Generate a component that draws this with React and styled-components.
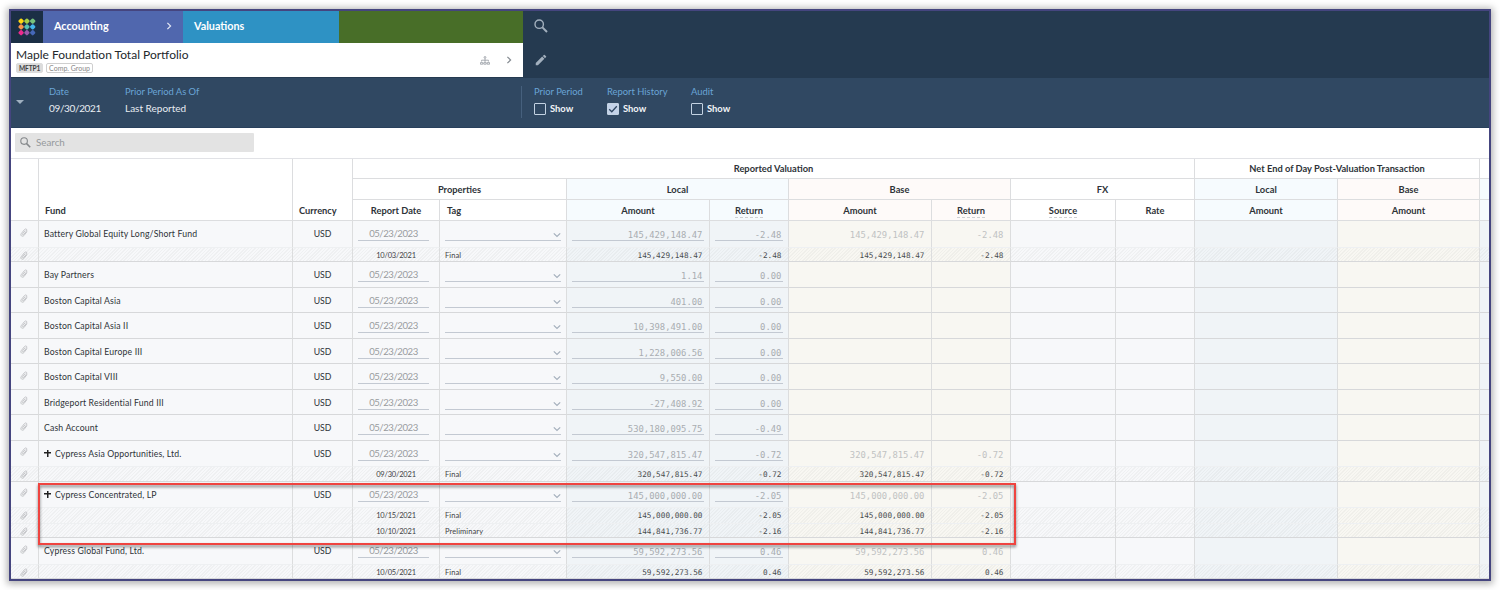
import React from "react";
import styled, { createGlobalStyle, css } from "styled-components";
import { MdEdit } from "react-icons/md";

const COLUMNS = "28px 254px 60px 87px 127px 143px 79px 143px 79px 105px 79px 143px 142px 9px";

const funds = [
  { name: "Battery Global Equity Long/Short Fund", amount: "145,429,148.47", ret: "-2.48", base: true,
    history: [{ date: "10/03/2021", tag: "Final", amount: "145,429,148.47", ret: "-2.48" }] },
  { name: "Bay Partners", amount: "1.14", ret: "0.00" },
  { name: "Boston Capital Asia", amount: "401.00", ret: "0.00" },
  { name: "Boston Capital Asia II", amount: "10,398,491.00", ret: "0.00" },
  { name: "Boston Capital Europe III", amount: "1,228,006.56", ret: "0.00" },
  { name: "Boston Capital VIII", amount: "9,550.00", ret: "0.00" },
  { name: "Bridgeport Residential Fund III", amount: "-27,408.92", ret: "0.00" },
  { name: "Cash Account", amount: "530,180,095.75", ret: "-0.49" },
  { name: "Cypress Asia Opportunities, Ltd.", plus: true, amount: "320,547,815.47", ret: "-0.72", base: true,
    history: [{ date: "09/30/2021", tag: "Final", amount: "320,547,815.47", ret: "-0.72" }] },
  { name: "Cypress Concentrated, LP", plus: true, amount: "145,000,000.00", ret: "-2.05", base: true,
    history: [
      { date: "10/15/2021", tag: "Final", amount: "145,000,000.00", ret: "-2.05" },
      { date: "10/10/2021", tag: "Preliminary", amount: "144,841,736.77", ret: "-2.16" },
    ] },
  { name: "Cypress Global Fund, Ltd.", amount: "59,592,273.56", ret: "0.46", base: true,
    history: [{ date: "10/05/2021", tag: "Final", amount: "59,592,273.56", ret: "0.46" }] },
];

const dots = ["#ffd90f", "#a5cf45", "#78c27b", "#f8944b", "#55c2b2", "#44b5ea", "#ee2a8e", "#9b59ab", "#4568b8"];

const Logo = () => (
  <svg width="18" height="18" viewBox="0 0 18 18">
    {dots.map((color, i) => (
      <rect key={color} x={0.9 + (i % 3) * 5.8} y={0.9 + Math.floor(i / 3) * 5.8} width="4.4" height="4.4" rx="1.1"
        fill={color} transform={`rotate(45 ${3.1 + (i % 3) * 5.8} ${3.1 + Math.floor(i / 3) * 5.8})`} />
    ))}
  </svg>
);

const Magnifier = ({ size, color }) => (
  <svg width={size} height={size} viewBox="0 0 14 14" fill="none" stroke={color}>
    <circle cx="5.2" cy="5.2" r="4.2" strokeWidth="1.4" />
    <path d="M8.4 8.4L13 13" strokeWidth="2" />
  </svg>
);

const OrgChart = () => (
  <svg width="10" height="9" viewBox="0 0 10 9" fill="none" stroke="#959ba2" strokeWidth="0.8">
    <circle cx="5" cy="1.4" r="0.9" />
    <path d="M5 2.3V6M1.6 5.6V4.2H8.4V5.6" />
    <path d="M0.4 8.2V6.6H2.8V8.2ZM3.8 8.2V6.6H6.2V8.2ZM7.2 8.2V6.6H9.6V8.2Z" />
  </svg>
);

const Chevron = ({ size = 8, color, down }) => (
  <svg width={size} height={size} viewBox="0 0 8 8" fill="none" stroke={color} strokeWidth="1.2">
    <path d={down ? "M0.8 2.3L4 5.5L7.2 2.3" : "M2.4 0.8L5.6 4L2.4 7.2"} />
  </svg>
);

const Clip = () => (
  <svg width="8" height="9" viewBox="0 0 8 9" fill="none" stroke="#bfc1c4" strokeWidth="0.9" strokeLinecap="round">
    <path d="M6.8 3.9L3.9 7.6C2.3 9.2 0 7.5 1.2 5.7L4.5 1.5C5.7 0.2 7.6 1.5 6.6 3L3.6 6.7C2.9 7.4 1.9 6.7 2.5 5.9L4.9 2.9" />
  </svg>
);

const App = () => {
  return (
    <>
      <GlobalStyle />
      <Frame>
        <TopBar>
          <NavSide>
            <Nav>
              <LogoBox><Logo /></LogoBox>
              <NavItem $width={140} $color="#5067ae">
                Accounting
                <Chevron color="#e4e8f4" />
              </NavItem>
              <NavItem $width={156} $color="#2e92c4">Valuations</NavItem>
              <NavItem $width={184} $color="#486e28" />
            </Nav>
            <TitleBar>
              <div>
                <Title>Maple Foundation Total Portfolio</Title>
                <Badges>
                  <Badge $filled>MFTP1</Badge>
                  <Badge>Comp. Group</Badge>
                </Badges>
              </div>
              <TitleIcons>
                <OrgChart />
                <Chevron color="#858b91" />
              </TitleIcons>
            </TitleBar>
          </NavSide>
          <Tools>
            <Magnifier size={14} color="#a3b0be" />
            <MdEdit size={14} color="#a3b0be" />
          </Tools>
        </TopBar>

        <Params>
          <Caret />
          <Param $width={76}><ParamLabel>Date</ParamLabel><ParamValue $tight>09/30/2021</ParamValue></Param>
          <Param $width={396}><ParamLabel>Prior Period As Of</ParamLabel><ParamValue>Last Reported</ParamValue></Param>
          <Divider />
          <Param $width={73}><ParamLabel>Prior Period</ParamLabel><Check /></Param>
          <Param $width={84}><ParamLabel>Report History</ParamLabel><Check checked /></Param>
          <Param $width={80}><ParamLabel>Audit</ParamLabel><Check /></Param>
        </Params>

        <SearchRow>
          <SearchBox>
            <Magnifier size={11} color="#85888b" />
            <span>Search</span>
          </SearchBox>
        </SearchRow>

        <Header>
          <HeadCell $col="1" $row="1 / 4" />
          <HeadCell $col="2" $row="1 / 4" $align="left" $pad={6}>Fund</HeadCell>
          <HeadCell $col="3" $row="1 / 4" $align="left" $pad={6}>Currency</HeadCell>
          <HeadCell $col="4 / 12" $row="1">Reported Valuation</HeadCell>
          <HeadCell $col="12 / 14" $row="1">Net End of Day Post-Valuation Transaction</HeadCell>
          <HeadCell $col="14" $row="1" $last />
          <HeadCell $col="4 / 6" $row="2">Properties</HeadCell>
          <HeadCell $col="6 / 8" $row="2" $tone="local">Local</HeadCell>
          <HeadCell $col="8 / 10" $row="2" $tone="base">Base</HeadCell>
          <HeadCell $col="10 / 12" $row="2">FX</HeadCell>
          <HeadCell $col="12" $row="2" $tone="local">Local</HeadCell>
          <HeadCell $col="13" $row="2" $tone="base">Base</HeadCell>
          <HeadCell $col="14" $row="2" $tone="local" $last />
          <HeadCell $col="4" $row="3">Report Date</HeadCell>
          <HeadCell $col="5" $row="3" $align="left" $pad={7}>Tag</HeadCell>
          <HeadCell $col="6" $row="3" $tone="local">Amount</HeadCell>
          <HeadCell $col="7" $row="3" $tone="local"><Hint>Return</Hint></HeadCell>
          <HeadCell $col="8" $row="3" $tone="base">Amount</HeadCell>
          <HeadCell $col="9" $row="3" $tone="base"><Hint>Return</Hint></HeadCell>
          <HeadCell $col="10" $row="3"><Hint>Source</Hint></HeadCell>
          <HeadCell $col="11" $row="3">Rate</HeadCell>
          <HeadCell $col="12" $row="3" $tone="local">Amount</HeadCell>
          <HeadCell $col="13" $row="3" $tone="base">Amount</HeadCell>
          <HeadCell $col="14" $row="3" $tone="local" $last />
        </Header>

        {funds.map((fund) => (
          <Fund key={fund.name} fund={fund} />
        ))}
      </Frame>
      <Highlight />
    </>
  );
};

export default App;

const Check = ({ checked }) => (
  <CheckLabel>
    <CheckBox $checked={checked}>
      {checked && (
        <svg width="10" height="10" viewBox="0 0 10 10" fill="none" stroke="#2f4660" strokeWidth="1.3">
          <path d="M1.2 5.2L3.8 7.7L8.8 2.3" />
        </svg>
      )}
    </CheckBox>
    Show
  </CheckLabel>
);

const Fund = ({ fund }) => {
  const history = fund.history || [];
  return (
    <Group>
      <Row>
        <ClipCell><Clip /></ClipCell>
        <NameCell>
          {fund.plus && <Plus />}
          {fund.name}
        </NameCell>
        <Cell><Currency>USD</Currency></Cell>
        <Cell><DateInput>05/23/2023</DateInput></Cell>
        <Cell><TagInput><Chevron color="#a4afbc" down /></TagInput></Cell>
        <Cell $tone="local"><NumberInput>{fund.amount}</NumberInput></Cell>
        <Cell $tone="local"><NumberInput>{fund.ret}</NumberInput></Cell>
        <Cell $tone="base">{fund.base && <Number>{fund.amount}</Number>}</Cell>
        <Cell $tone="base">{fund.base && <Number>{fund.ret}</Number>}</Cell>
        <Cell />
        <Cell />
        <Cell $tone="local" />
        <Cell $tone="base" />
        <Cell $tone="local" $last />
      </Row>
      {history.map((item) => (
        <HistoryRow key={item.date}>
          <ClipCell $small><Clip /></ClipCell>
          <Cell />
          <Cell />
          <Cell><SmallText $center>{item.date}</SmallText></Cell>
          <Cell><SmallText>{item.tag}</SmallText></Cell>
          <Cell $tone="local"><SmallNumber>{item.amount}</SmallNumber></Cell>
          <Cell $tone="local"><SmallNumber>{item.ret}</SmallNumber></Cell>
          <Cell $tone="base"><SmallNumber>{item.amount}</SmallNumber></Cell>
          <Cell $tone="base"><SmallNumber>{item.ret}</SmallNumber></Cell>
          <Cell />
          <Cell />
          <Cell $tone="local" />
          <Cell $tone="base" />
          <Cell $tone="local" $last />
        </HistoryRow>
      ))}
    </Group>
  );
};

const GlobalStyle = createGlobalStyle`
  * {
    box-sizing: border-box;
  }

  body {
    margin: 0;
    background: #fff;
    font-family: Lato, "Open Sans", sans-serif;
    color: #2e3338;
    overflow: hidden;
  }

  svg {
    display: block;
    flex-shrink: 0;
  }
`

const headTones = { local: "#f6fbfe", base: "#fefaf9" };
const bodyTones = { local: "#f0f4f7", base: "#f8f7f2" };

const Frame = styled.div`
  width: 1482px;
  height: 572px;
  margin: 9px;
  border: 2px solid #45457f;
  background: #fff;
  overflow: hidden;
  box-shadow: 0 1px 7px 2px rgba(0, 0, 0, 0.3);
`

const TopBar = styled.div`
  display: flex;
  height: 67px;
  background: #253a50;
`

const NavSide = styled.div`
  width: 512px;
`

const Nav = styled.div`
  display: flex;
  height: 32px;
`

const LogoBox = styled.div`
  display: flex;
  width: 32px;
  padding: 7px 0 0 7px;
  background: #1b2f45;
`

const NavItem = styled.div`
  display: flex;
  align-items: center;
  justify-content: space-between;
  width: ${(props) => props.$width}px;
  padding: 0 10px 3px 11px;
  background: ${(props) => props.$color};
  color: #fff;
  font-size: 10.8px;
  font-weight: 700;
`

const TitleBar = styled.div`
  display: flex;
  justify-content: space-between;
  height: 34px;
  padding: 4px 10px 0 5px;
  background: #fff;
`

const Title = styled.div`
  color: #24282c;
  font-size: 12px;
  line-height: 15px;
`

const Badges = styled.div`
  display: flex;
  gap: 3px;
  margin-top: 1px;
`

const Badge = styled.span`
  height: 10px;
  padding: 0 2px;
  border: 1px solid ${(props) => (props.$filled ? "#dcdcdc" : "#cfcfcf")};
  border-radius: 2px;
  background: ${(props) => (props.$filled ? "#dcdcdc" : "#fff")};
  color: ${(props) => (props.$filled ? "#3f3f3f" : "#888")};
  font-size: ${(props) => (props.$filled ? 6.6 : 7)}px;
  letter-spacing: ${(props) => (props.$filled ? "-0.15px" : "0")};
  font-weight: ${(props) => (props.$filled ? 700 : 400)};
  line-height: 8px;
`

const TitleIcons = styled.div`
  display: flex;
  align-items: center;
  gap: 15px;
  padding-bottom: 4px;
`

const Tools = styled.div`
  display: flex;
  flex-direction: column;
  gap: 20px;
  padding: 8px 0 0 11px;
`

const Params = styled.div`
  display: flex;
  height: 50px;
  padding-top: 8px;
  background: #304862;
  border-bottom: 1px solid #28405c;
`

const Caret = styled.div`
  width: 0;
  height: 0;
  margin: 14px 25px 0 5px;
  border: 4px solid transparent;
  border-top-color: #9fb0c0;
  border-bottom: 0;
`

const Param = styled.div`
  width: ${(props) => props.$width}px;
`

const ParamLabel = styled.div`
  color: #6aa5d6;
  font-size: 9.4px;
  line-height: 12px;
`

const ParamValue = styled.div`
  margin-top: 4px;
  color: #e8edf2;
  font-size: 10px;
  letter-spacing: ${(props) => (props.$tight ? "-0.35px" : "0")};
  line-height: 13px;
`

const Divider = styled.div`
  width: 1px;
  height: 32px;
  margin-right: 12px;
  background: #46607d;
`

const CheckLabel = styled.div`
  display: flex;
  align-items: center;
  gap: 4px;
  margin-top: 4px;
  color: #f2f5f8;
  font-size: 9.4px;
  font-weight: 700;
  line-height: 13px;
`

const CheckBox = styled.span`
  display: flex;
  align-items: center;
  justify-content: center;
  width: 12px;
  height: 12px;
  border: 1px solid #c3d2e2;
  border-radius: 1px;
  background: ${(props) => (props.$checked ? "#c3d2e8" : "transparent")};
`

const SearchRow = styled.div`
  height: 31px;
  padding: 5px 4px 0;
  border-bottom: 1px solid #e1e2e6;
`

const SearchBox = styled.div`
  display: flex;
  align-items: center;
  gap: 5px;
  width: 239px;
  height: 19px;
  padding-left: 5px;
  border-radius: 1px;
  background: #e3e3e3;
  color: #95999c;
  font-size: 9.8px;

  span {
    padding-bottom: 2px;
  }
`

const Header = styled.div`
  display: grid;
  grid-template-columns: ${COLUMNS};
  grid-template-rows: 20px 21px 21px;
`

const HeadCell = styled.div`
  display: flex;
  grid-column: ${(props) => props.$col};
  grid-row: ${(props) => props.$row};
  align-items: flex-end;
  justify-content: ${(props) => (props.$align === "left" ? "flex-start" : "center")};
  padding: 0 0 3px ${(props) => props.$pad || 0}px;
  border-right: ${(props) => (props.$last ? "0" : "1px solid #dcdddf")};
  border-bottom: 1px solid #dcdddf;
  background: ${(props) => headTones[props.$tone] || "#fff"};
  font-size: 9.3px;
  font-weight: 700;
  line-height: 12px;
  white-space: nowrap;
`

const Hint = styled.span`
  height: 13px;
  margin-bottom: -1px;
  border-bottom: 1px dashed #cfd1d3;
`

const Group = styled.div`
  > :last-child > * {
    border-bottom: 1px solid #d7d8da;
  }
`

const rowGrid = css`
  display: grid;
  grid-template-columns: ${COLUMNS};
  grid-template-rows: 100%;
`

const Row = styled.div`
  ${rowGrid}
  height: 25.5px;
`

const Cell = styled.div`
  min-width: 0;
  min-height: 0;
  padding: 0 5px;
  border-right: ${(props) => (props.$last ? "0" : "1px solid #dcddde")};
  background-color: ${(props) => bodyTones[props.$tone] || "#f7f8fa"};
  white-space: nowrap;
`

const HistoryRow = styled.div`
  ${rowGrid}
  height: 15.5px;

  ${Cell} {
    border-top: 1px solid #eef0f2;
    background-image: repeating-linear-gradient(135deg, transparent 0 1.3px, rgba(110, 115, 110, 0.06) 1.3px 2.4px);
  }
`

const ClipCell = styled(Cell)`
  padding: ${(props) => (props.$small ? "3px" : "6.5px")} 0 0 9px;
`

const NameCell = styled(Cell)`
  display: flex;
  align-items: flex-start;
  font-size: 8.7px;
  letter-spacing: 0.15px;
  line-height: 25px;
`

const Plus = styled.span`
  width: 7px;
  height: 7px;
  margin: 9px 4px 0 0;
  background:
    linear-gradient(#222, #222) center / 7px 1.5px no-repeat,
    linear-gradient(#222, #222) center / 1.5px 7px no-repeat;
`

const Currency = styled.div`
  font-size: 8.7px;
  line-height: 25px;
  text-align: center;
`

const DateInput = styled.div`
  width: 71px;
  height: 20px;
  border-bottom: 1px solid #c3c9d2;
  color: #999c9f;
  font-size: 9.6px;
  letter-spacing: -0.45px;
  line-height: 25px;
  text-align: center;
`

const TagInput = styled.div`
  display: flex;
  justify-content: flex-end;
  height: 20px;
  padding-top: 10px;
  border-bottom: 1px solid #c3c9d2;
`

const Number = styled.div`
  height: 20px;
  padding-right: 1.6px;
  color: #c0c2c2;
  font-family: "DejaVu Sans Mono", monospace;
  font-size: 8.85px;
  line-height: 28px;
  text-align: right;
`

const NumberInput = styled(Number)`
  border-bottom: 1px solid #c3c9d2;
  color: #a9adb1;
`

const SmallText = styled.div`
  height: 13px;
  color: #3f4245;
  font-size: 7.5px;
  letter-spacing: ${(props) => (props.$center ? "-0.2px" : "0.1px")};
  line-height: 16px;
  text-align: ${(props) => (props.$center ? "center" : "left")};
`

const SmallNumber = styled.div`
  height: 13px;
  padding-right: 1.6px;
  color: #4a4d50;
  font-family: "DejaVu Sans Mono", monospace;
  font-size: 7.7px;
  line-height: 16px;
  text-align: right;
`

/* Callout drawn over the table */
const Highlight = styled.div`
  position: absolute;
  top: 483px;
  left: 38px;
  width: 978px;
  height: 62px;
  border: 2px solid #ef4440;
  filter: drop-shadow(0 2px 1.5px rgba(0, 0, 0, 0.5));
`
